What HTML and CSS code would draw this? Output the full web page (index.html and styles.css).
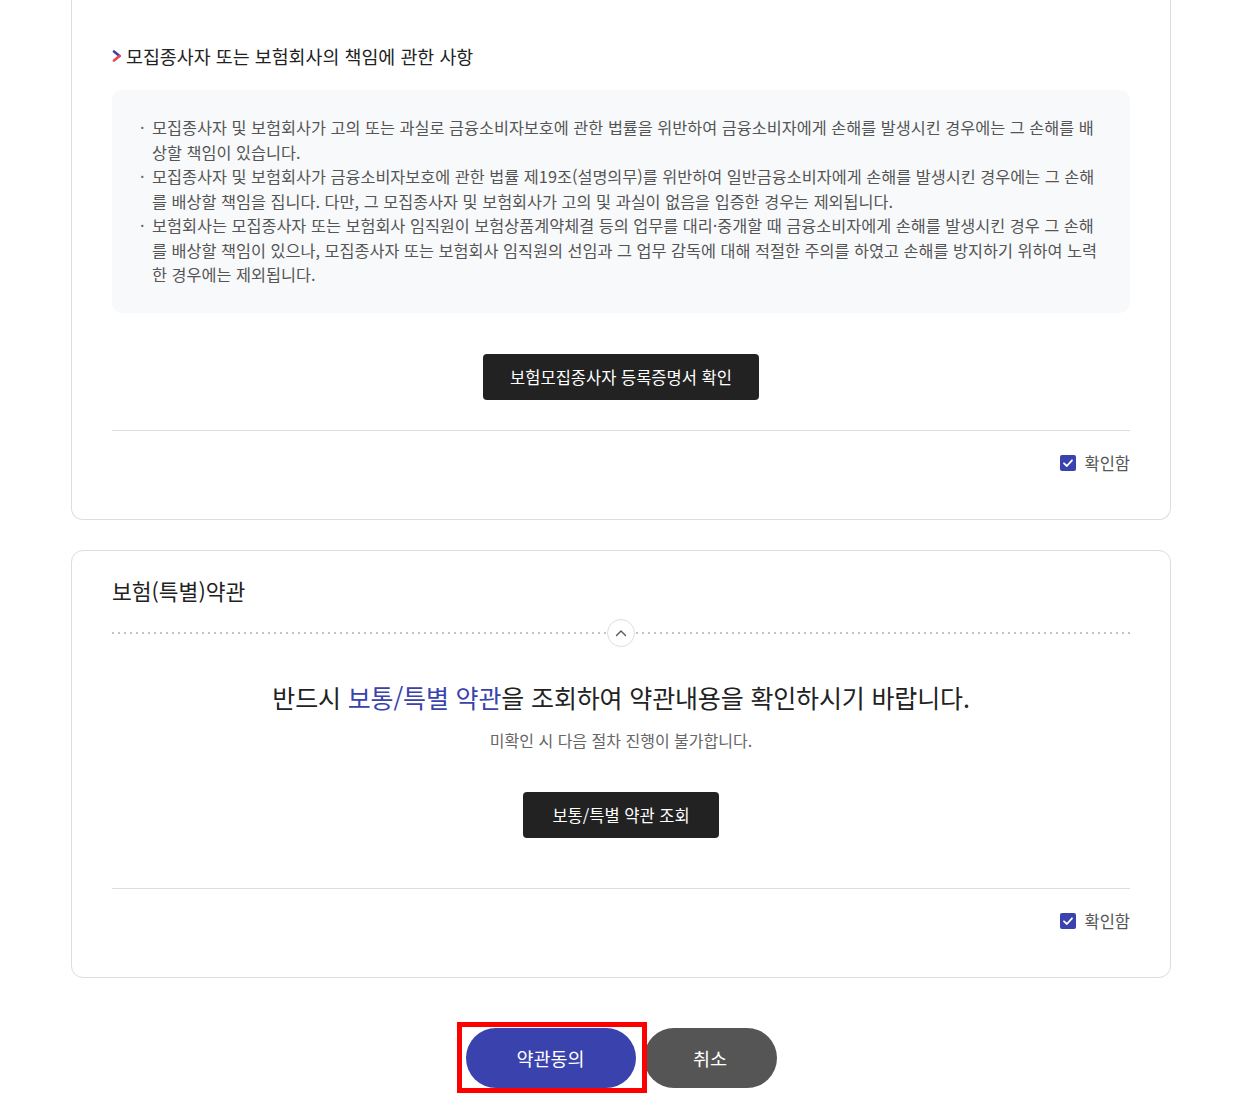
FILE: index.html
```html
<!DOCTYPE html>
<html lang="ko">
<head>
<meta charset="utf-8">
<title>약관동의</title>
<link rel="stylesheet" href="styles.css">
</head>
<body>
<div class="page">
  <section class="card card--cut">
    <h3 class="sec-title">
      <svg class="sec-title__icon" width="10" height="12" viewBox="0 0 10 12" aria-hidden="true">
        <path d="M2 1.5 L7.5 6" stroke="#3a42ad" stroke-width="2.6" stroke-linecap="round" fill="none"/>
        <path d="M7.5 6 L2 10.5" stroke="#ec4452" stroke-width="2.6" stroke-linecap="round" fill="none"/>
      </svg>
      모집종사자 또는 보험회사의 책임에 관한 사항
    </h3>
    <div class="notice-box">
      <ul class="notice-list">
        <li>모집종사자 및 보험회사가 고의 또는 과실로 금융소비자보호에 관한 법률을 위반하여 금융소비자에게 손해를 발생시킨 경우에는 그 손해를 배상할 책임이 있습니다.</li>
        <li>모집종사자 및 보험회사가 금융소비자보호에 관한 법률 제19조(설명의무)를 위반하여 일반금융소비자에게 손해를 발생시킨 경우에는 그 손해를 배상할 책임을 집니다. 다만, 그 모집종사자 및 보험회사가 고의 및 과실이 없음을 입증한 경우는 제외됩니다.</li>
        <li>보험회사는 모집종사자 또는 보험회사 임직원이 보험상품계약체결 등의 업무를 대리·중개할 때 금융소비자에게 손해를 발생시킨 경우 그 손해를 배상할 책임이 있으나, 모집종사자 또는 보험회사 임직원의 선임과 그 업무 감독에 대해 적절한 주의를 하였고 손해를 방지하기 위하여 노력한 경우에는 제외됩니다.</li>
      </ul>
    </div>
    <div class="btn-row">
      <button class="btn-dark" type="button">보험모집종사자 등록증명서 확인</button>
    </div>
    <div class="confirm">
      <label class="check">
        <span class="check__box">
          <svg width="16" height="16" viewBox="0 0 16 16" aria-hidden="true"><path d="M4 8.3 L6.9 11 L12 5.3" stroke="#fff" stroke-width="1.8" fill="none" stroke-linecap="round" stroke-linejoin="round"/></svg>
        </span>
        <span class="check__label">확인함</span>
      </label>
    </div>
  </section>

  <section class="card card--terms">
    <h3 class="card-title">보험(특별)약관</h3>
    <div class="fold">
      <span class="fold__line"></span>
      <button class="fold__btn" type="button" aria-label="접기">
        <svg width="12" height="8" viewBox="0 0 12 8" aria-hidden="true"><path d="M1.5 6.5 L6 2 L10.5 6.5" stroke="#555" stroke-width="1.4" fill="none" stroke-linecap="round" stroke-linejoin="round"/></svg>
      </button>
      <span class="fold__line"></span>
    </div>
    <p class="lead">반드시 <em>보통/특별 약관</em>을 조회하여 약관내용을 확인하시기 바랍니다.</p>
    <p class="sub">미확인 시 다음 절차 진행이 불가합니다.</p>
    <div class="btn-row btn-row--terms">
      <button class="btn-dark btn-dark--terms" type="button">보통/특별 약관 조회</button>
    </div>
    <div class="confirm confirm--terms">
      <label class="check">
        <span class="check__box">
          <svg width="16" height="16" viewBox="0 0 16 16" aria-hidden="true"><path d="M4 8.3 L6.9 11 L12 5.3" stroke="#fff" stroke-width="1.8" fill="none" stroke-linecap="round" stroke-linejoin="round"/></svg>
        </span>
        <span class="check__label">확인함</span>
      </label>
    </div>
  </section>

  <div class="actions">
    <span class="highlight-wrap">
      <button class="btn-pill btn-pill--primary" type="button">약관동의</button>
      <span class="highlight" aria-hidden="true"></span>
    </span>
    <button class="btn-pill btn-pill--gray" type="button">취소</button>
  </div>
</div>
</body>
</html>
```

FILE: styles.css
```css
* { box-sizing: border-box; }

html, body {
  margin: 0;
  background: #fff;
}

body {
  padding-left: 3px;
  font-family: "Noto Sans CJK KR", "Noto Sans", sans-serif;
  color: #222;
}

.page {
  width: 1100px;
  margin: 0 auto;
  padding-bottom: 40px;
}

.card {
  border: 1px solid #ddd;
  border-radius: 12px;
  padding: 0 40px 45px;
  background: #fff;
}

.card--cut {
  border-top: 0;
  border-radius: 0 0 12px 12px;
  padding-top: 44px;
}

.sec-title {
  display: flex;
  align-items: center;
  gap: 4px;
  margin: 0;
  font-size: 18.4px;
  line-height: 24px;
  font-weight: 400;
  color: #222;
}

.sec-title__icon {
  flex: none;
}

.notice-box {
  margin-top: 22px;
  background: #f8f9fb;
  border-radius: 10px;
  padding: 25px 30px 26px 28px;
}

.notice-list {
  list-style: none;
  margin: 0;
  padding: 0;
  font-size: 16.3px;
  line-height: 24.5px;
  color: #555;
  word-break: break-all;
}

.notice-list li {
  padding-left: 12px;
  text-indent: -12px;
}

.notice-list li::before {
  content: "·";
  display: inline-block;
  width: 12px;
  text-indent: 0;
  color: #666;
}

.btn-row {
  display: flex;
  justify-content: center;
  margin-top: 41px;
}

.btn-dark {
  height: 46px;
  padding: 0 27px;
  border: 0;
  border-radius: 4px;
  background: #222;
  color: #fff;
  font-family: inherit;
  font-size: 16.5px;
  cursor: pointer;
}

.btn-dark--terms {
  padding: 0 29px;
}

.confirm {
  margin-top: 30px;
  border-top: 1px solid #ddd;
  padding-top: 21px;
  display: flex;
  justify-content: flex-end;
}

.confirm--terms {
  margin-top: 50px;
}

.check {
  display: flex;
  align-items: center;
  gap: 8px;
  height: 22px;
  cursor: pointer;
}

.check__box {
  width: 16px;
  height: 16px;
  border-radius: 2px;
  background: #3a42ad;
  display: flex;
}

.check__label {
  font-size: 16.5px;
  line-height: 22px;
  color: #555;
}

.card--terms {
  margin-top: 30px;
  padding-top: 26px;
}

.card-title {
  margin: 0;
  font-size: 21.5px;
  line-height: 28px;
  font-weight: 400;
  color: #222;
}

.fold {
  display: flex;
  align-items: center;
  margin-top: 14px;
  height: 28px;
}

.fold__line {
  flex: 1;
  height: 2px;
  background-image: linear-gradient(to right, #c4c4c4 2px, transparent 2px);
  background-size: 6px 2px;
  background-repeat: repeat-x;
}

.fold__btn {
  flex: none;
  width: 28px;
  height: 28px;
  margin: 0 1px;
  border: 1px solid #ddd;
  border-radius: 50%;
  background: #fff;
  padding: 0;
  display: flex;
  align-items: center;
  justify-content: center;
  cursor: pointer;
}

.lead {
  margin: 33px 0 0;
  text-align: center;
  font-size: 25px;
  line-height: 34px;
  color: #222;
  letter-spacing: -0.15px;
}

.lead em {
  font-style: normal;
  color: #3a42ad;
}

.sub {
  margin: 15px 0 0;
  text-align: center;
  font-size: 16px;
  line-height: 22px;
  color: #666;
}

.actions {
  display: flex;
  justify-content: center;
  gap: 8px;
  margin-top: 50px;
}

.highlight-wrap {
  position: relative;
  display: flex;
}

.highlight {
  position: absolute;
  top: -6px;
  left: -9px;
  right: -11px;
  bottom: -5px;
  border: 5px solid #ff0000;
  pointer-events: none;
}

.btn-pill {
  height: 60px;
  border: 0;
  border-radius: 30px;
  color: #fff;
  font-family: inherit;
  font-size: 18.5px;
  cursor: pointer;
}

.btn-pill--primary {
  width: 170px;
  background: #3a42ad;
}

.btn-pill--gray {
  width: 133px;
  background: #555;
}
```
